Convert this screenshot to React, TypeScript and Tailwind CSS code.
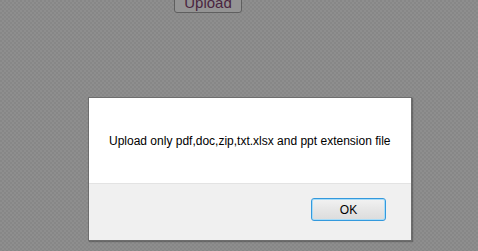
import React from "react";

export default function App() {
  return (
    <div className="relative h-[251px] w-[478px] overflow-hidden bg-[#8b8b8b] font-['Liberation_Sans',Arial,sans-serif]">
      <div className="absolute inset-0 bg-[repeating-conic-gradient(#8e8e8e_0_25%,#878787_0_50%)] bg-[length:4px_4px]" />
      <div className="relative flex flex-col">
        <button className="ml-[174px] mt-[-9px] h-[22px] w-[68px] rounded-[3px] border border-[#5f5f5f] bg-[#949494] pt-[1px] text-[15px] leading-none text-[#4a2440]">
          Upload
        </button>
        <div className="ml-[88px] mt-[84px] flex h-[144px] w-[324px] flex-col border border-[#6e6e6e] bg-white shadow-[1px_1px_1px_rgba(0,0,0,0.25)]">
          <div className="flex h-[85px] items-center pl-[20px] pt-[1px] text-[12px] text-black">
            Upload only pdf,doc,zip,txt.xlsx and ppt extension file
          </div>
          <div className="flex flex-1 items-start justify-end border-t border-[#e3e3e3] bg-[#f0f0f0] pr-[25px] pt-[14px]">
            <button className="h-[23px] w-[75px] rounded-[3px] border border-[#3399dd] bg-[linear-gradient(#f2f2f2,#e6e6e6_50%,#dcdcdc)] text-[12px] text-black shadow-[inset_0_0_0_1px_#a7dcf8]">
              OK
            </button>
          </div>
        </div>
      </div>
    </div>
  );
}
